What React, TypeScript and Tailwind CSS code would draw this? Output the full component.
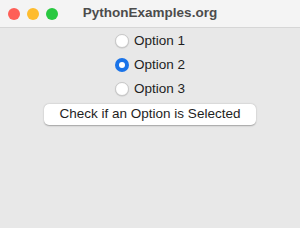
import { useState } from 'react'

const options = ['Option 1', 'Option 2', 'Option 3']

function Radio({ checked }: { checked: boolean }) {
  if (checked) {
    return (
      <span className="flex h-[14px] w-[14px] items-center justify-center rounded-full bg-[#1a73e8]">
        <span className="h-[6px] w-[6px] rounded-full bg-white" />
      </span>
    )
  }
  return <span className="h-[14px] w-[14px] rounded-full border border-[#c8c8c8] bg-white shadow-[0_0.5px_1px_rgba(0,0,0,0.15)]" />
}

export default function App() {
  const [selected, setSelected] = useState(1)

  return (
    <div className="flex h-[228px] w-[300px] flex-col bg-[#e8e8e8] font-['Liberation_Sans',Arial,sans-serif] text-[#1e1e1e]">
      <div className="relative flex h-[28px] shrink-0 items-center justify-center border-b border-[#d6d6d6] bg-[#f4f4f4]">
        <div className="absolute left-[8px] top-[8px] flex gap-[7px]">
          <span className="h-[12px] w-[12px] rounded-full bg-[#fe5f57]" />
          <span className="h-[12px] w-[12px] rounded-full bg-[#febc2e]" />
          <span className="h-[12px] w-[12px] rounded-full bg-[#28c840]" />
        </div>
        <span className="text-[13.5px] font-bold text-[#4c4c4c]">PythonExamples.org</span>
      </div>

      <div className="flex flex-col items-center pt-[1px]">
        {options.map((o, i) => (
          <label
            key={o}
            onClick={() => setSelected(i)}
            className="flex h-[24px] items-center gap-[5px] text-[13.5px]"
          >
            <Radio checked={selected === i} />
            <span>{o}</span>
          </label>
        ))}
        <button className="mt-[3px] h-[21px] w-[212px] rounded-[5px] bg-white text-[13.5px] shadow-[0_0.5px_1.5px_rgba(0,0,0,0.3)]">
          Check if an Option is Selected
        </button>
      </div>
    </div>
  )
}
